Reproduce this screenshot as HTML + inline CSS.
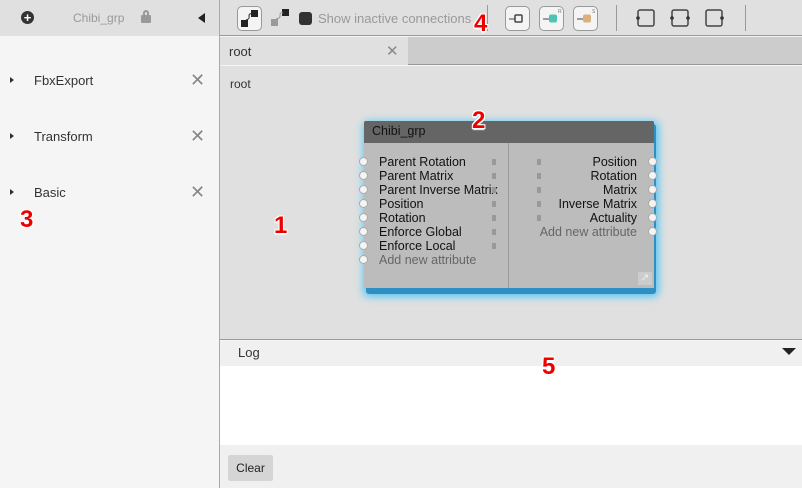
<!DOCTYPE html>
<html><head><meta charset="utf-8"><style>
*{margin:0;padding:0;box-sizing:border-box}
body{width:802px;height:488px;overflow:hidden;font-family:"Liberation Sans",sans-serif;background:#f5f5f5;position:relative;font-size:13px;color:#333}
.a{position:absolute}
.num{position:absolute;z-index:5;font:bold 24px "Liberation Sans",sans-serif;color:#e00;text-shadow:-1px -1px 0 #fff,1px -1px 0 #fff,-1px 1px 0 #fff,1px 1px 0 #fff,0 2px 1px #fff}
.btn{position:absolute;top:6px;width:25px;height:25px;border:1px solid #999;border-radius:5px;background:#f4f4f4}
.port{position:absolute;width:9px;height:9px;border-radius:50%;background:#f4f4f4;border:1px solid #aaa}
.sq{position:absolute;width:4px;height:6px;background:#999}
.lt{position:absolute;font-size:12.5px;color:#111;line-height:14px;white-space:nowrap}
</style></head><body>
<!-- left panel -->
<div class="a" style="left:0;top:0;width:219px;height:36px;background:#e0e0e0"></div>
<div class="a" style="left:21px;top:11px;width:13px;height:13px;border-radius:50%;background:#333;color:#fff;font:bold 13px/13px 'Liberation Sans';text-align:center">+</div>
<div class="a" style="left:73px;top:11px;color:#999;font-size:12px">Chibi_grp</div>
<div class="a" style="left:141px;top:15px;width:10px;height:8px;background:#999;border-radius:1px"></div>
<div class="a" style="left:143px;top:10px;width:6px;height:7px;border:2px solid #999;border-bottom:none;border-radius:3px 3px 0 0"></div>
<div class="a" style="left:198px;top:13px;width:0;height:0;border-top:5px solid transparent;border-bottom:5px solid transparent;border-right:7px solid #222"></div>
<div class="a" style="left:219px;top:0;width:1px;height:488px;background:#aaa"></div>
<div class="a" style="left:10px;top:77px;border-top:3px solid transparent;border-bottom:3px solid transparent;border-left:4px solid #333"></div>
<div class="a" style="left:34px;top:73px">FbxExport</div>
<div class="a" style="left:190px;top:70px;color:#888;font-size:18px">✕</div>
<div class="a" style="left:10px;top:133px;border-top:3px solid transparent;border-bottom:3px solid transparent;border-left:4px solid #333"></div>
<div class="a" style="left:34px;top:129px">Transform</div>
<div class="a" style="left:190px;top:126px;color:#888;font-size:18px">✕</div>
<div class="a" style="left:10px;top:189px;border-top:3px solid transparent;border-bottom:3px solid transparent;border-left:4px solid #333"></div>
<div class="a" style="left:34px;top:185px">Basic</div>
<div class="a" style="left:190px;top:182px;color:#888;font-size:18px">✕</div>
<div class="num" style="left:20px;top:206px">3</div>
<!-- toolbar -->
<div class="a" style="left:220px;top:0;width:582px;height:36px;background:#e0e0e0;border-bottom:1px solid #999"></div>
<div class="btn" style="left:237px"><svg width="25" height="25"><rect x="3" y="13" width="7" height="7" fill="#222"/><rect x="13" y="3" width="7" height="7" fill="#222"/><path d="M8 13 Q12 12 11 9 Q11 6 14 7" stroke="#222" fill="none"/></svg></div>
<svg class="a" style="left:270px;top:6px" width="25" height="25"><rect x="1" y="13" width="7" height="7" fill="#999"/><rect x="12" y="3" width="7" height="7" fill="#222"/><path d="M6 13 Q11 12 10 9 Q10 6 13 7" stroke="#999" fill="none"/></svg>
<div class="a" style="left:299px;top:12px;width:13px;height:13px;border-radius:3px;background:#333"></div>
<div class="a" style="left:318px;top:11px;color:#999">Show inactive connections</div>
<div class="a" style="left:487px;top:5px;width:1px;height:26px;background:#999"></div>
<div class="btn" style="left:505px"><svg width="25" height="25"><path d="M3 12h6" stroke="#444"/><rect x="9" y="8" width="7" height="7" rx="1" fill="none" stroke="#444" stroke-width="1.5"/></svg></div>
<div class="btn" style="left:539px"><svg width="25" height="25"><path d="M3 12h6" stroke="#444"/><rect x="9" y="7.5" width="8" height="8" rx="2" fill="#4cc4b8"/><text x="18" y="6" font-size="5" fill="#777">R</text></svg></div>
<div class="btn" style="left:573px"><svg width="25" height="25"><path d="M3 12h6" stroke="#444"/><rect x="9" y="7.5" width="8" height="8" rx="2" fill="#dcb07e"/><text x="18" y="6" font-size="5" fill="#777">S</text></svg></div>
<div class="a" style="left:616px;top:5px;width:1px;height:26px;background:#999"></div>
<svg class="a" style="left:634px;top:8px" width="90" height="22"><rect x="4" y="2" width="16" height="16" rx="2" fill="none" stroke="#444" stroke-width="1.5"/><circle cx="4" cy="10" r="1.8" fill="#333"/><rect x="38" y="2" width="16" height="16" rx="2" fill="none" stroke="#444" stroke-width="1.5"/><circle cx="38" cy="10" r="1.8" fill="#333"/><circle cx="54" cy="10" r="1.8" fill="#333"/><rect x="72" y="2" width="16" height="16" rx="2" fill="none" stroke="#444" stroke-width="1.5"/><circle cx="88" cy="10" r="1.8" fill="#333"/></svg>
<div class="a" style="left:745px;top:5px;width:1px;height:26px;background:#999"></div>
<div class="num" style="left:474px;top:10px">4</div>
<!-- tabs -->
<div class="a" style="left:220px;top:37px;width:582px;height:28px;background:#ccc;border-bottom:1px solid #999"></div>
<div class="a" style="left:220px;top:37px;width:188px;height:28px;background:#e0e0e0"></div>
<div class="a" style="left:229px;top:44px">root</div>
<div class="a" style="left:386px;top:42px;color:#888;font-size:15px">✕</div>
<!-- canvas -->
<div class="a" style="left:220px;top:66px;width:582px;height:274px;background:#e0e0e0;border-bottom:1px solid #999"></div>
<div class="a" style="left:230px;top:77px;font-size:12px">root</div>
<div class="num" style="left:274px;top:212px">1</div>
<!-- node -->
<div class="a" style="left:366px;top:124px;width:290px;height:170px;background:#2e8fc4;border-radius:3px;box-shadow:0 0 8px 3px #5bc8f5"></div>
<div class="a" style="left:364px;top:121px;width:290px;height:167px;background:#bcbcbc"></div>
<div class="a" style="left:364px;top:121px;width:290px;height:22px;background:#656565;border-radius:2px 2px 0 0"></div>
<div class="a" style="left:372px;top:124px;color:#111;font-size:12.5px">Chibi_grp</div>
<div class="num" style="left:472px;top:107px">2</div>
<div class="a" style="left:508px;top:143px;width:1px;height:145px;background:#999"></div>
<div class="a" style="left:638px;top:272px;width:14px;height:13px;background:#ccc"></div>
<div class="a" style="left:640px;top:271px;color:#eee;font-size:11px">↗</div>
<div class="lt" style="left:379px;top:155px">Parent Rotation<br>Parent Matrix<br>Parent Inverse Matrix<br>Position<br>Rotation<br>Enforce Global<br>Enforce Local<br><span style="color:#666">Add new attribute</span></div>
<div class="lt" style="left:530px;top:155px;width:107px;text-align:right">Position<br>Rotation<br>Matrix<br>Inverse Matrix<br>Actuality<br><span style="color:#666">Add new attribute</span></div>
<div class="port" style="left:359px;top:157px"></div><div class="port" style="left:359px;top:171px"></div><div class="port" style="left:359px;top:185px"></div><div class="port" style="left:359px;top:199px"></div><div class="port" style="left:359px;top:213px"></div><div class="port" style="left:359px;top:227px"></div><div class="port" style="left:359px;top:241px"></div><div class="port" style="left:359px;top:255px"></div>
<div class="port" style="left:648px;top:157px"></div><div class="port" style="left:648px;top:171px"></div><div class="port" style="left:648px;top:185px"></div><div class="port" style="left:648px;top:199px"></div><div class="port" style="left:648px;top:213px"></div><div class="port" style="left:648px;top:227px"></div>
<div class="sq" style="left:492px;top:159px"></div><div class="sq" style="left:492px;top:173px"></div><div class="sq" style="left:492px;top:187px"></div><div class="sq" style="left:492px;top:201px"></div><div class="sq" style="left:492px;top:215px"></div><div class="sq" style="left:492px;top:229px"></div><div class="sq" style="left:492px;top:243px"></div>
<div class="sq" style="left:537px;top:159px"></div><div class="sq" style="left:537px;top:173px"></div><div class="sq" style="left:537px;top:187px"></div><div class="sq" style="left:537px;top:201px"></div><div class="sq" style="left:537px;top:215px"></div>
<!-- log -->
<div class="a" style="left:220px;top:341px;width:582px;height:25px;background:#f0f0f0"></div>
<div class="a" style="left:238px;top:345px">Log</div>
<div class="a" style="left:782px;top:348px;border-left:7px solid transparent;border-right:7px solid transparent;border-top:7px solid #222"></div>
<div class="a" style="left:220px;top:366px;width:582px;height:79px;background:#fff"></div>
<div class="num" style="left:542px;top:353px">5</div>
<div class="a" style="left:220px;top:445px;width:582px;height:43px;background:#f0f0f0"></div>
<div class="a" style="left:228px;top:455px;width:45px;height:26px;background:#d5d5d5;border-radius:2px;font-size:12px;line-height:26px;text-align:center;color:#222">Clear</div>
</body></html>
